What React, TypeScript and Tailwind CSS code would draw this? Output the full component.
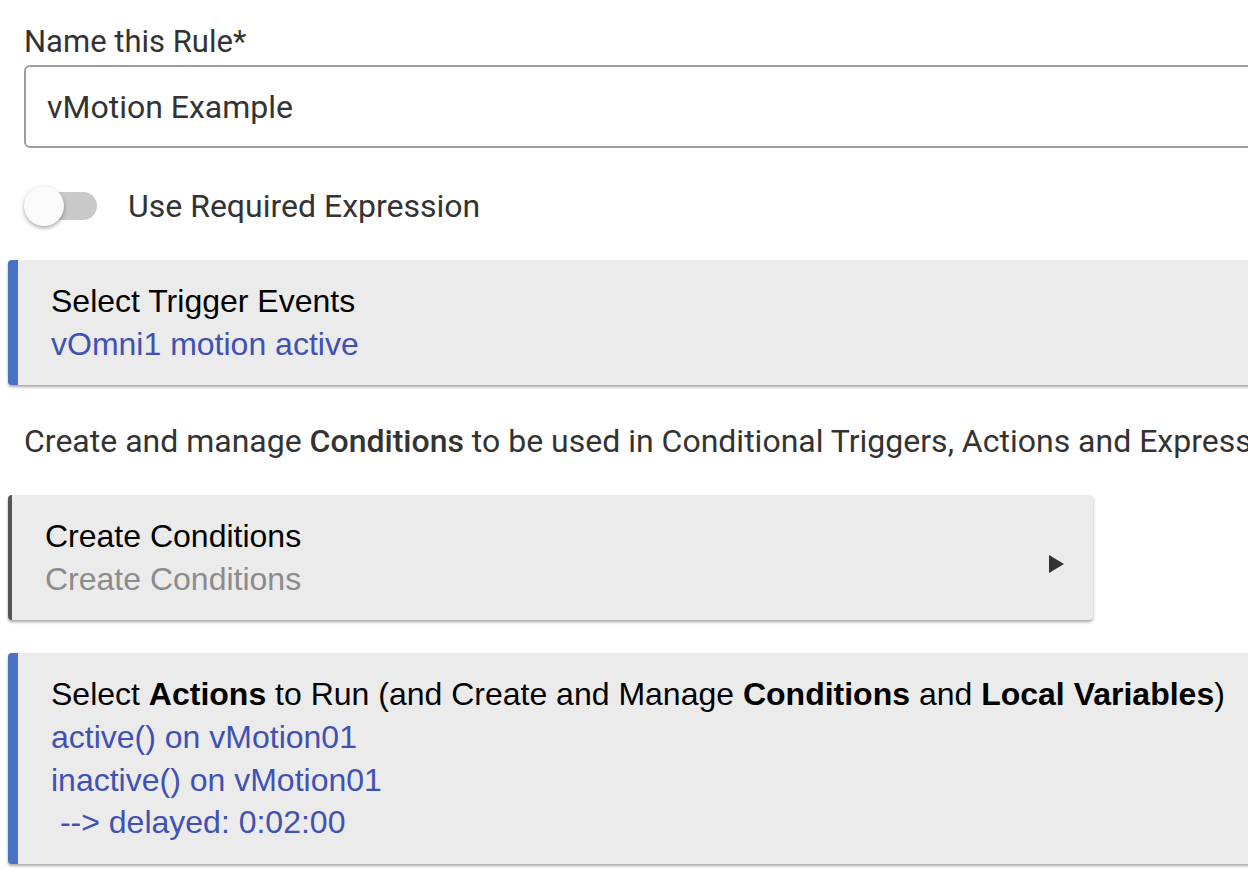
import React from "react";

const roboto = "font-['Roboto',_'Liberation_Sans',_sans-serif]";
const arial = "font-['Liberation_Sans',_Arial,_sans-serif]";

function Card({
  accent,
  children,
  width,
  trailing,
}: {
  accent: string;
  children: React.ReactNode;
  width?: string;
  trailing?: React.ReactNode;
}) {
  return (
    <div
      className={`${width ?? "w-full"} ${accent} bg-[#ebebeb] rounded-[4px] shadow-[0_2px_3px_rgba(0,0,0,0.35)] flex items-center ${arial}`}
    >
      <div className="flex-1 py-[20px] pl-[33px] text-[32px] leading-[42.6px] text-black">
        {children}
      </div>
      {trailing}
    </div>
  );
}

export default function App() {
  return (
    <div className="w-[1248px] h-[884px] overflow-hidden bg-white">
      <div className="w-[1500px] px-[8px] pt-[22px]">
        {/* Nombre de la regla */}
        <div className={`pl-[16px] ${roboto} text-[31px] leading-[40px] text-[#333]`}>
          Name this Rule*
        </div>
        <div className="ml-[16px] mt-[3px] h-[83px] border-2 border-[#9e9e9e] rounded-[6px] flex items-center px-[21px]">
          <span className={`${roboto} text-[32px] text-[#333]`}>vMotion Example</span>
        </div>

        {/* Toggle */}
        <div className="flex items-center mt-[38px] pl-[16px] h-[40px]">
          <div className="relative w-[72px] h-[28px]">
            <div className="absolute left-[1px] top-0 w-[72px] h-[28px] rounded-full bg-[#c9c9c9]" />
            <div className="absolute left-0 -top-[6px] w-[40px] h-[40px] rounded-full bg-[#fafafa] shadow-[0_2px_4px_rgba(0,0,0,0.35)]" />
          </div>
          <span className={`ml-[32px] ${roboto} text-[32px] text-[#333]`}>
            Use Required Expression
          </span>
        </div>

        <div className="mt-[34px]">
          <Card accent="border-l-[10px] border-[#4a72c4]">
            <div>Select Trigger Events</div>
            <div className="text-[#3f51b5]">vOmni1 motion active</div>
          </Card>
        </div>

        <p className={`pl-[16px] mt-[36px] ${roboto} text-[32px] leading-[40px] text-[#333] whitespace-nowrap`}>
          Create and manage <b className="font-medium">Conditions</b> to be used in
          Conditional Triggers, Actions and Expressions
        </p>

        <div className="mt-[34px]">
          <Card
            accent="border-l-[4px] border-[#555]"
            width="w-[1085px]"
            trailing={
              <svg width="15" height="18" viewBox="0 0 15 18" className="mr-[29px] mt-[12px]">
                <polygon points="0,0 15,9 0,18" fill="#333" />
              </svg>
            }
          >
            <div>Create Conditions</div>
            <div className="text-[#8c8c8c]">Create Conditions</div>
          </Card>
        </div>

        <div className="mt-[33px]">
          <Card accent="border-l-[10px] border-[#4a72c4]">
            <div>
              Select <b>Actions</b> to Run (and Create and Manage <b>Conditions</b> and{" "}
              <b>Local Variables</b>)
            </div>
            <div className="text-[#3f51b5]">active() on vMotion01</div>
            <div className="text-[#3f51b5]">inactive() on vMotion01</div>
            <div className="text-[#3f51b5] whitespace-pre"> --&gt; delayed: 0:02:00</div>
          </Card>
        </div>
      </div>
    </div>
  );
}
